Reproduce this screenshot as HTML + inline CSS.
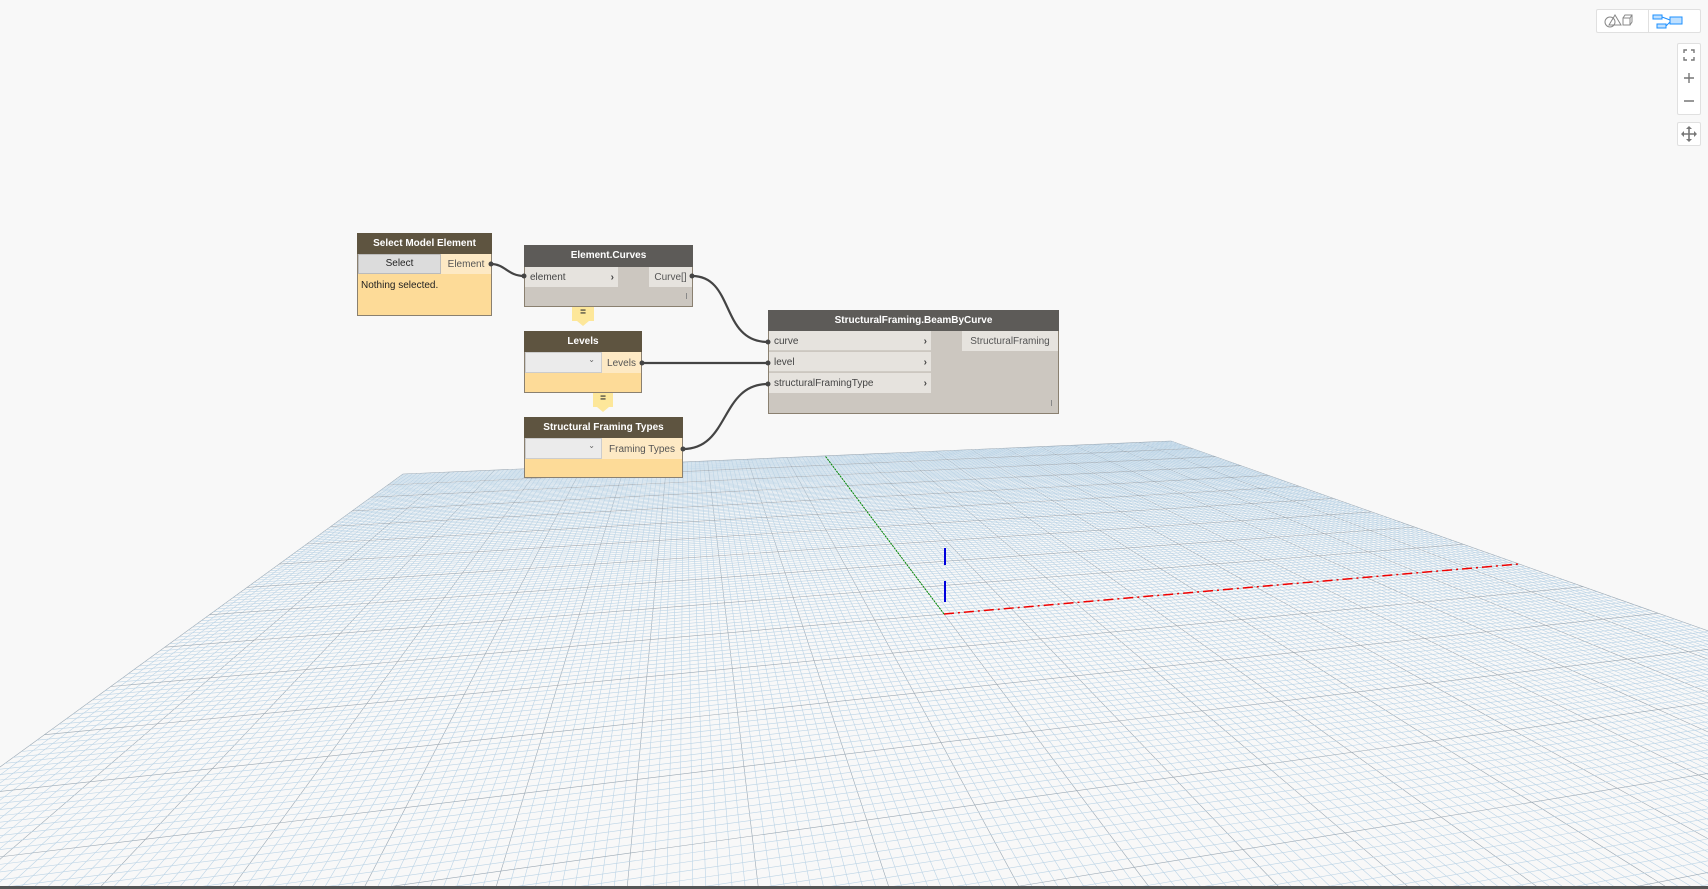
<!DOCTYPE html>
<html><head><meta charset="utf-8"><style>
*{margin:0;padding:0;box-sizing:border-box}
html,body{width:1708px;height:889px;overflow:hidden}
body{background:#f8f8f8;position:relative;font-family:"Liberation Sans",sans-serif;font-size:10px;color:#333}
.a{position:absolute}
svg{overflow:hidden}
.hd{color:#fff;font-weight:bold;text-align:center;line-height:22px;font-size:10px}
.br{background:#5e5440}
.gr{background:#5d5b58}
.yl{background:#fddb98}
.lt{background:#fde9c4}
.gy{background:#ccc7c0}
.in{background:#e6e3de;line-height:20px;padding-left:5px;color:#444}
.ch{position:absolute;right:4px;top:0;font-weight:bold;color:#444}
.lbl{line-height:21px;text-align:center;color:#555}
.node{border:1px solid #8a8070}
.dd{background:#ebebeb;border:1px solid #ccc}
.bub{background:#fde79a}
</style></head><body>
<svg class="a" style="left:0;top:0" width="1708" height="889" id="g"></svg>

<div class="a node yl" style="left:357px;top:233px;width:135px;height:83px"></div>
<div class="a hd br" style="left:357px;top:233px;width:135px;height:21px">Select Model Element</div>
<div class="a lbl" style="left:358px;top:254px;width:83px;height:20px;background:#dcdcdc;color:#222;border:1px solid #bbb;line-height:18px">Select</div>
<div class="a lbl lt" style="left:441px;top:254px;width:50px;height:20px">Element</div>
<div class="a" style="left:361px;top:280px;color:#222">Nothing selected.</div>

<div class="a node gy" style="left:524px;top:245px;width:169px;height:62px"></div>
<div class="a hd gr" style="left:524px;top:245px;width:169px;height:22px">Element.Curves</div>
<div class="a in" style="left:525px;top:267px;width:93px;height:20px;line-height:21px">element<span class="ch">›</span></div>
<div class="a lbl in" style="left:649px;top:267px;width:43px;height:20px;padding:0">Curve[]</div>
<div class="a" style="left:686px;top:293px;width:1px;height:6px;background:#888"></div>

<div class="a bub" style="left:572px;top:307px;width:22px;height:14px;text-align:center;font-weight:bold;line-height:12px">=</div>
<div class="a" style="left:577px;top:321px;border-left:6px solid transparent;border-right:6px solid transparent;border-top:5px solid #fde79a"></div>
<div class="a bub" style="left:593px;top:393px;width:20px;height:14px;text-align:center;font-weight:bold;line-height:12px">=</div>
<div class="a" style="left:597px;top:407px;border-left:6px solid transparent;border-right:6px solid transparent;border-top:5px solid #fde79a"></div>

<div class="a node yl" style="left:524px;top:331px;width:118px;height:62px"></div>
<div class="a hd br" style="left:524px;top:331px;width:118px;height:21px">Levels</div>
<div class="a dd" style="left:525px;top:352px;width:77px;height:21px"><span style="position:absolute;right:6px;top:2px;font-size:8px;color:#666">⌄</span></div>
<div class="a lbl lt" style="left:602px;top:352px;width:39px;height:21px;line-height:23px">Levels</div>

<div class="a node yl" style="left:524px;top:417px;width:159px;height:61px"></div>
<div class="a hd br" style="left:524px;top:417px;width:159px;height:21px">Structural Framing Types</div>
<div class="a dd" style="left:525px;top:438px;width:77px;height:21px"><span style="position:absolute;right:6px;top:2px;font-size:8px;color:#666">⌄</span></div>
<div class="a lbl lt" style="left:602px;top:438px;width:80px;height:21px;line-height:23px">Framing Types</div>

<div class="a node gy" style="left:768px;top:310px;width:291px;height:104px"></div>
<div class="a hd gr" style="left:768px;top:310px;width:291px;height:21px">StructuralFraming.BeamByCurve</div>
<div class="a in" style="left:769px;top:331px;width:162px;height:20px;line-height:22px;border-bottom:1px solid #d0ccc5">curve<span class="ch">›</span></div>
<div class="a in" style="left:769px;top:352px;width:162px;height:20px;line-height:22px;border-bottom:1px solid #d0ccc5">level<span class="ch">›</span></div>
<div class="a in" style="left:769px;top:373px;width:162px;height:20px;line-height:22px">structuralFramingType<span class="ch">›</span></div>
<div class="a lbl in" style="left:962px;top:331px;width:96px;height:20px;padding:0;line-height:22px">StructuralFraming</div>
<div class="a" style="left:1051px;top:400px;width:1px;height:6px;background:#888"></div>

<svg class="a" style="left:0;top:0" width="1708" height="889">
<g fill="none" stroke="#444" stroke-width="2.2">
<path d="M491 264 C505 264 508 276 524 276"/>
<path d="M692 276 C735 276 720 342 768 342"/>
<path d="M642 363 L768 363"/>
<path d="M683 449 C730 449 720 384 768 384"/>
</g>
<g fill="#444"><circle cx="491" cy="264" r="2.5"/><circle cx="524" cy="276" r="2.5"/><circle cx="692" cy="276" r="2.5"/><circle cx="768" cy="342" r="2.5"/><circle cx="642" cy="363" r="2.5"/><circle cx="768" cy="363" r="2.5"/><circle cx="683" cy="449" r="2.5"/><circle cx="768" cy="384" r="2.5"/></g>
</svg>

<div class="a" style="left:1596px;top:9px;width:105px;height:24px;background:#fff;border:1px solid #e0e0e0;border-radius:2px"></div>
<div class="a" style="left:1648px;top:10px;width:1px;height:22px;background:#e0e0e0"></div>
<svg class="a" style="left:1600px;top:10px" width="100" height="22">
<g fill="none" stroke="#888" stroke-width="1"><circle cx="10" cy="12" r="5"/><path d="M9 15 L15 5 L21 15 Z"/><rect x="23" y="8" width="7" height="7"/><path d="M23 8 L25 5 L32 5 L32 12 L30 15 M30 8 L32 5"/></g>
<g stroke="#1e90ff" fill="#bfe0ff" stroke-width="1"><rect x="53" y="5" width="9" height="4"/><rect x="57" y="14" width="9" height="4"/><rect x="70" y="7" width="12" height="7"/><path d="M62 7 L70 10 M66 16 L70 12" fill="none"/></g>
</svg>
<div class="a" style="left:1677px;top:43px;width:24px;height:72px;background:#fff;border:1px solid #e0e0e0;border-radius:2px"></div>
<svg class="a" style="left:1677px;top:43px" width="24" height="72">
<g fill="none" stroke="#777" stroke-width="1.4"><path d="M7 10V7H10M14 7H17V10M17 14V17H14M10 17H7V14"/><path d="M12 30V40M7 35H17M7 58H17"/></g></svg>
<div class="a" style="left:1677px;top:122px;width:24px;height:24px;background:#fff;border:1px solid #e0e0e0;border-radius:2px"></div>
<svg class="a" style="left:1677px;top:122px" width="24" height="24"><g stroke="#777" stroke-width="1.6" fill="#777"><path d="M12 5V19M5 12H19"/><path d="M12 4l-3 3h6zM12 20l-3-3h6zM4 12l3-3v6zM20 12l-3-3v6z" stroke="none"/></g></svg>

<div class="a" style="left:0;top:886px;width:1708px;height:3px;background:#555"></div>

<script>
(function(){
var N=50;
function solve(A,b){var n=b.length;for(var i=0;i<n;i++){var m=i;for(var r=i+1;r<n;r++)if(Math.abs(A[r][i])>Math.abs(A[m][i]))m=r;var t=A[i];A[i]=A[m];A[m]=t;t=b[i];b[i]=b[m];b[m]=t;for(var r=0;r<n;r++){if(r==i)continue;var f=A[r][i]/A[i][i];for(var c=i;c<n;c++)A[r][c]-=f*A[i][c];b[r]-=f*b[i];}}return b.map(function(v,i){return v/A[i][i];});}
var src=[[0,0],[N,0],[-N,N],[N,N]],dst=[[944,614],[1519,564],[403,474],[1171,441]];
var A=[],b=[];
for(var k=0;k<4;k++){var x=src[k][0],y=src[k][1],u=dst[k][0],v=dst[k][1];
A.push([x,y,1,0,0,0,-u*x,-u*y]);b.push(u);A.push([0,0,0,x,y,1,-v*x,-v*y]);b.push(v);}
var h=solve(A,b);
function W(x,y){return h[6]*x+h[7]*y+1;}
function P(x,y){var w=W(x,y);return[(h[0]*x+h[1]*y+h[2])/w,(h[3]*x+h[4]*y+h[5])/w];}
function ok(x,y){if(W(x,y)<=0.02)return false;var p=P(x,y);return p[1]<1000;}
var s='',step=0.5;
for(var i=-N;i<=N+1e-9;i+=step){
 var ii=Math.round(i*2)/2;var major=(Math.abs(ii%5)<1e-6);var c=major?'#9aa8b4':'#bcd4e6';
 var y=N;while(y>-N&&ok(ii,y-0.25))y-=0.25;
 var p=P(ii,N),q=P(ii,y);
 s+='<line x1="'+p[0].toFixed(1)+'" y1="'+p[1].toFixed(1)+'" x2="'+q[0].toFixed(1)+'" y2="'+q[1].toFixed(1)+'" stroke="'+c+'" stroke-width="0.6"/>';
}
for(var j=N;j>=-N;j-=step){
 var jj=Math.round(j*2)/2;
 if(!ok(0,jj)&&!ok(-N,jj)&&!ok(N,jj))break;
 var major=(Math.abs(jj%5)<1e-6);var c=major?'#9aa8b4':'#bcd4e6';
 var xa=-N;while(xa<N&&!ok(xa,jj))xa+=0.25;
 var xb=N;while(xb>xa&&!ok(xb,jj))xb-=0.25;
 var p=P(xa,jj),q=P(xb,jj);
 s+='<line x1="'+p[0].toFixed(1)+'" y1="'+p[1].toFixed(1)+'" x2="'+q[0].toFixed(1)+'" y2="'+q[1].toFixed(1)+'" stroke="'+c+'" stroke-width="0.6"/>';
}
var o=P(0,0),xe=P(N,0),ye=P(0,N);
s+='<line x1="'+o[0]+'" y1="'+o[1]+'" x2="'+xe[0]+'" y2="'+xe[1]+'" stroke="#e00" stroke-width="1.5" stroke-dasharray="10 4 2 4"/>';
s+='<line x1="'+o[0]+'" y1="'+o[1]+'" x2="'+ye[0]+'" y2="'+ye[1]+'" stroke="#080" stroke-width="1" stroke-dasharray="2 1"/>';
s+='<line x1="945" y1="548" x2="945" y2="565" stroke="#00d" stroke-width="2"/><line x1="945" y1="581" x2="945" y2="602" stroke="#00d" stroke-width="2"/>';
document.getElementById('g').innerHTML=s;
})();
</script>
</body></html>
